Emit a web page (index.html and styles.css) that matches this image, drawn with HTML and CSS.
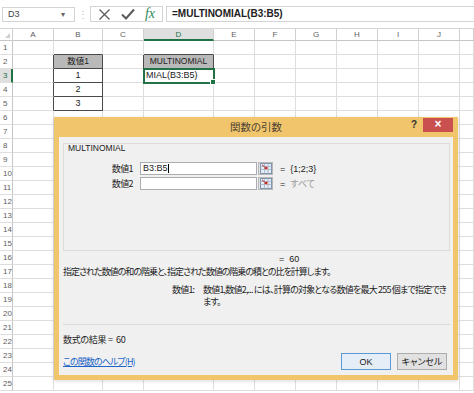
FILE: index.html
```html
<!DOCTYPE html>
<html lang="ja">
<head>
  <meta charset="UTF-8" />
  <meta name="viewport" content="width=device-width, initial-scale=1.0" />
  <title>関数の引数</title>
  <link rel="stylesheet" href="styles.css">
</head>
<body>
<div class="app">

  <!-- formula bar -->
  <div class="formula-bar">
    <div class="name-box"><span>D3</span><span class="caret">&#9662;</span></div>
    <div class="grip">&#8942;</div>
    <div class="fx-buttons">
      <svg width="13" height="13" viewBox="0 0 13 13"><path d="M1.5 1.5L11.5 11.5M11.5 1.5L1.5 11.5" stroke="#5a5a5a" stroke-width="1.3"/></svg>
      <svg width="14" height="12" viewBox="0 0 14 12"><path d="M1 6.5L5 10.5L13 1.5" stroke="#5a5a5a" stroke-width="2" fill="none"/></svg>
      <span class="fx">fx</span>
    </div>
    <div class="formula">=MULTINOMIAL(B3:B5)</div>
  </div>

  <!-- worksheet, cells are built by script.js -->
  <div class="sheet" id="sheet"></div>

  <!-- function arguments dialog -->
  <div class="dialog">
    <div class="dlg-title">
      <span class="dlg-caption">関数の引数</span>
      <span class="dlg-help">?</span>
      <span class="dlg-close">&#215;</span>
    </div>
    <div class="dlg-body">
      <div class="group">
        <div class="group-caption">MULTINOMIAL</div>
        <div class="arg-row">
          <span class="arg-label">数値1</span>
          <span class="arg-input">B3:B5<span class="text-caret"></span></span>
          <span class="ref-btn">
            <svg width="12" height="11" viewBox="0 0 12 11">
              <rect x="0.5" y="0.5" width="11" height="10" fill="#e4ecf6" stroke="#7f93ad"/>
              <path d="M0.5 3.5H11.5M0.5 6.5H11.5M4.5 0.5V10.5M8 0.5V10.5" stroke="#9fb1c8" stroke-width="0.8"/>
              <rect x="5" y="4" width="3" height="2.5" fill="#ea8a83"/>
              <path d="M2 1.8L6.5 5.5M6.5 5.5V3.6M6.5 5.5H4.6" stroke="#c0291f" stroke-width="1" fill="none"/>
            </svg>
          </span>
          <span class="arg-value">= &nbsp;{1;2;3}</span>
        </div>
        <div class="arg-row">
          <span class="arg-label">数値2</span>
          <span class="arg-input"></span>
          <span class="ref-btn">
            <svg width="12" height="11" viewBox="0 0 12 11">
              <rect x="0.5" y="0.5" width="11" height="10" fill="#e4ecf6" stroke="#7f93ad"/>
              <path d="M0.5 3.5H11.5M0.5 6.5H11.5M4.5 0.5V10.5M8 0.5V10.5" stroke="#9fb1c8" stroke-width="0.8"/>
              <rect x="5" y="4" width="3" height="2.5" fill="#ea8a83"/>
              <path d="M2 1.8L6.5 5.5M6.5 5.5V3.6M6.5 5.5H4.6" stroke="#c0291f" stroke-width="1" fill="none"/>
            </svg>
          </span>
          <span class="arg-value">= &nbsp;<span class="muted">すべて</span></span>
        </div>
      </div>

      <div class="result-line">= &nbsp;60</div>
      <p class="desc">指定された数値の和の階乗と、指定された数値の階乗の積との比を計算します。</p>
      <div class="param">
        <span class="param-name">数値1:</span>
        <span class="param-text">数値1,数値2,... には、計算の対象となる数値を最大 255 個まで指定できます。</span>
      </div>

      <div class="sep"></div>
      <div class="formula-result">数式の結果 = &nbsp;60</div>

      <div class="dlg-footer">
        <a class="help-link" href="#">この関数のヘルプ(H)</a>
        <div class="buttons">
          <button class="btn btn-default">OK</button>
          <button class="btn">キャンセル</button>
        </div>
      </div>
    </div>
  </div>

</div>
<script src="script.js"></script>
</body>
</html>
```

FILE: styles.css
```css
body {
  margin: 0;
  width: 474px;
  height: 393px;
  overflow: hidden;
  background: #fff;
  font-family: "Liberation Sans", "Noto Sans CJK JP", sans-serif;
  font-size: 9px;
  color: #222;
}

.app {
  position: relative;
  height: 393px;
}

/* formula bar */
.formula-bar {
  height: 28px;
  border-bottom: 1px solid #d6d6d6;
  display: flex;
  align-items: center;
  padding-left: 2px;
}

.name-box {
  width: 73px;
  height: 15px;
  box-sizing: border-box;
  border: 1px solid #d4d4d4;
  display: flex;
  align-items: center;
  justify-content: space-between;
  padding: 0 4px 0 5px;
  color: #444;
  font-size: 9px;
}

.name-box .caret {
  color: #666;
  font-size: 8px;
  margin-right: 5px;
}

.grip {
  width: 15px;
  text-align: center;
  color: #bbb;
  font-size: 10px;
}

.fx-buttons {
  width: 73px;
  height: 16px;
  box-sizing: border-box;
  border: 1px solid #d4d4d4;
  display: flex;
  align-items: center;
  justify-content: space-around;
  padding: 0 2px;
}

.fx {
  font-family: "Liberation Serif", serif;
  font-style: italic;
  font-size: 14px;
  color: #2f8a57;
  line-height: 14px;
}

.formula {
  flex: 1;
  height: 16px;
  box-sizing: border-box;
  margin-left: 3px;
  border: 1px solid #d4d4d4;
  border-right: none;
  padding-left: 5px;
  font-weight: bold;
  font-size: 10px;
  line-height: 14px;
  color: #222;
}

/* worksheet */
.sheet {
  display: grid;
  grid-template-columns: 13px 41px 49px 41px 70px 41px 41px 41px 41px 41px 41px 1fr;
  grid-auto-rows: 14px;
  grid-template-rows: 12px;
  color: #222;
}

.cell {
  box-sizing: border-box;
  border-right: 1px solid #dedede;
  border-bottom: 1px solid #dedede;
  line-height: 13px;
  font-size: 9px;
  white-space: nowrap;
  overflow: hidden;
}

.cell.edge-r { border-right-color: #4a4a4a; }
.cell.edge-b { border-bottom-color: #4a4a4a; }

.col-head {
  text-align: center;
  color: #5e5e5e;
  font-size: 8px;
  line-height: 11px;
  border-right-color: #d0d0d0;
  border-bottom-color: #c6c6c6;
}

.col-head.active {
  background: #dfdfdf;
  color: #217346;
  border-bottom: 2px solid #217346;
}

.corner {
  position: relative;
}

.corner::after {
  content: "";
  position: absolute;
  right: 2px;
  bottom: 2px;
  border-left: 5px solid transparent;
  border-bottom: 5px solid #cfcfcf;
}

.row-head {
  color: #5e5e5e;
  font-size: 8px;
  padding-left: 3px;
  border-right-color: #c6c6c6;
}

.row-head.active {
  background: #dfdfdf;
  color: #217346;
  border-right: 2px solid #217346;
}

.cell.center { text-align: center; }

.cell.fill {
  background: #b9b9b9;
  font-size: 8.5px;
}

.cell.sel {
  position: relative;
  outline: 2px solid #217346;
  outline-offset: -1px;
  padding-left: 2px;
  overflow: visible;
}

.cell.sel::after {
  content: "";
  position: absolute;
  right: -3px;
  bottom: -3px;
  width: 4px;
  height: 4px;
  background: #217346;
  border: 1px solid #fff;
}

/* dialog */
.dialog {
  position: absolute;
  left: 54px;
  top: 117px;
  width: 404px;
  height: 263px;
  box-sizing: border-box;
  background: #f1c56c;
  padding: 0 5px 5px;
  display: flex;
  flex-direction: column;
  font-family: "Liberation Sans", "Noto Sans CJK JP", sans-serif;
  font-feature-settings: "palt";
  box-shadow: 0 1px 4px rgba(0, 0, 0, 0.15);
}

.dlg-title {
  height: 20px;
  display: flex;
  align-items: flex-start;
  justify-content: center;
  position: relative;
}

.dlg-caption {
  font-family: "Noto Sans CJK JP", sans-serif;
  font-size: 10.5px;
  line-height: 20px;
  color: #4d4231;
}

.dlg-help {
  position: absolute;
  right: 36px;
  top: 2px;
  font-weight: bold;
  font-size: 10px;
  color: #333;
}

.dlg-close {
  position: absolute;
  right: 0;
  top: 1px;
  width: 30px;
  height: 14px;
  background: #c9504f;
  color: #fff;
  font-size: 12px;
  line-height: 13px;
  text-align: center;
  font-weight: bold;
}

.dlg-body {
  flex: 1;
  background: #f0f0f0;
  padding: 0 3px 0 4px;
}

.group {
  margin-top: 6px;
  height: 108px;
  box-sizing: border-box;
  border: 1px solid #dcdcdc;
}

.group-caption {
  margin-top: -2px;
  padding-left: 4px;
  height: 12px;
  line-height: 12px;
  font-size: 8.5px;
  color: #222;
}

.arg-row {
  display: flex;
  align-items: center;
  height: 13px;
  margin-top: 2px;
}

.group-caption + .arg-row { margin-top: 8px; }

.arg-label {
  width: 69px;
  text-align: right;
  font-family: "Noto Sans CJK JP", sans-serif;
  font-size: 9px;
  letter-spacing: -0.6px;
}

.arg-input {
  margin-left: 7px;
  width: 117px;
  height: 13px;
  box-sizing: border-box;
  border: 1px solid #abadb3;
  background: #fff;
  padding-left: 2px;
  line-height: 11px;
  font-size: 9px;
  display: flex;
  align-items: center;
}

.text-caret {
  width: 1px;
  height: 9px;
  background: #000;
}

.ref-btn {
  margin-left: 1px;
  width: 15px;
  height: 13px;
  box-sizing: border-box;
  border: 1px solid #b8b8b8;
  background: #e3e3e3;
  display: flex;
  align-items: center;
  justify-content: center;
}

.arg-value {
  margin-left: 7px;
  font-size: 9px;
  color: #222;
}

.muted {
  color: #9a9a9a;
  font-family: "Noto Sans CJK JP", sans-serif;
}

.result-line {
  margin-top: 2px;
  padding-left: 216px;
  line-height: 12px;
  font-size: 9px;
}

.desc {
  margin: 1px 0 0;
  line-height: 12px;
  font-size: 9px;
  font-family: "Noto Sans CJK JP", sans-serif;
  letter-spacing: -1px;
}

.param {
  margin-top: 6px;
  display: flex;
  padding-left: 109px;
  line-height: 12px;
  font-family: "Noto Sans CJK JP", sans-serif;
  letter-spacing: -0.8px;
}

.param-name {
  width: 31px;
  flex: none;
}

.param-text {
  width: 258px;
}

.sep {
  margin-top: 16px;
  border-top: 1px solid #dadada;
}

.formula-result {
  margin-top: 9px;
  line-height: 12px;
  font-family: "Noto Sans CJK JP", sans-serif;
  letter-spacing: -0.3px;
}

.dlg-footer {
  margin-top: 7px;
  height: 17px;
  display: flex;
  align-items: center;
  justify-content: space-between;
}

.help-link {
  color: #1a64c8;
  text-decoration: underline;
  font-family: "Noto Sans CJK JP", sans-serif;
  font-size: 9px;
  letter-spacing: -0.9px;
}

.buttons {
  display: flex;
  gap: 6px;
  margin-right: 3px;
}

.btn {
  width: 50px;
  height: 17px;
  box-sizing: border-box;
  border: 1px solid #adadad;
  background: #e1e1e1;
  font-family: "Liberation Sans", "Noto Sans CJK JP", sans-serif;
  font-feature-settings: "palt";
  font-size: 9px;
  color: #222;
  padding: 0;
}

.btn-default {
  border-color: #5b9bd5;
  background: #e5eef7;
}
```

FILE: script.js
```js
// build the visible part of the worksheet
const cols = ['', 'A', 'B', 'C', 'D', 'E', 'F', 'G', 'H', 'I', 'J', ''];
const rowCount = 25;

const values = {
  B2: '数値1', B3: '1', B4: '2', B5: '3',
  D2: 'MULTINOMIAL', D3: 'MIAL(B3:B5)'
};
const boxed = ['B2', 'B3', 'B4', 'B5', 'D2'];
const filled = ['B2', 'D2'];

const isBoxed = (ci, r) => ci > 0 && ci < cols.length && cols[ci] !== '' && boxed.includes(cols[ci] + r);

const sheet = document.getElementById('sheet');

cols.forEach((c, ci) => {
  const el = document.createElement('div');
  el.className = 'cell col-head';
  if (ci === 0) el.classList.add('corner');
  if (c === 'D') el.classList.add('active');
  el.textContent = c;
  sheet.appendChild(el);
});

for (let r = 1; r <= rowCount; r++) {
  cols.forEach((c, ci) => {
    const el = document.createElement('div');
    el.className = 'cell';
    if (ci === 0) {
      el.classList.add('row-head');
      if (r === 3) el.classList.add('active');
      el.textContent = r;
    } else {
      const key = c + r;
      if (isBoxed(ci, r) || isBoxed(ci + 1, r)) el.classList.add('edge-r');
      if (isBoxed(ci, r) || isBoxed(ci, r + 1)) el.classList.add('edge-b');
      if (filled.includes(key)) el.classList.add('fill');
      if (key === 'D3') el.classList.add('sel');
      else if (values[key]) el.classList.add('center');
      if (values[key]) el.textContent = values[key];
    }
    sheet.appendChild(el);
  });
}
```
